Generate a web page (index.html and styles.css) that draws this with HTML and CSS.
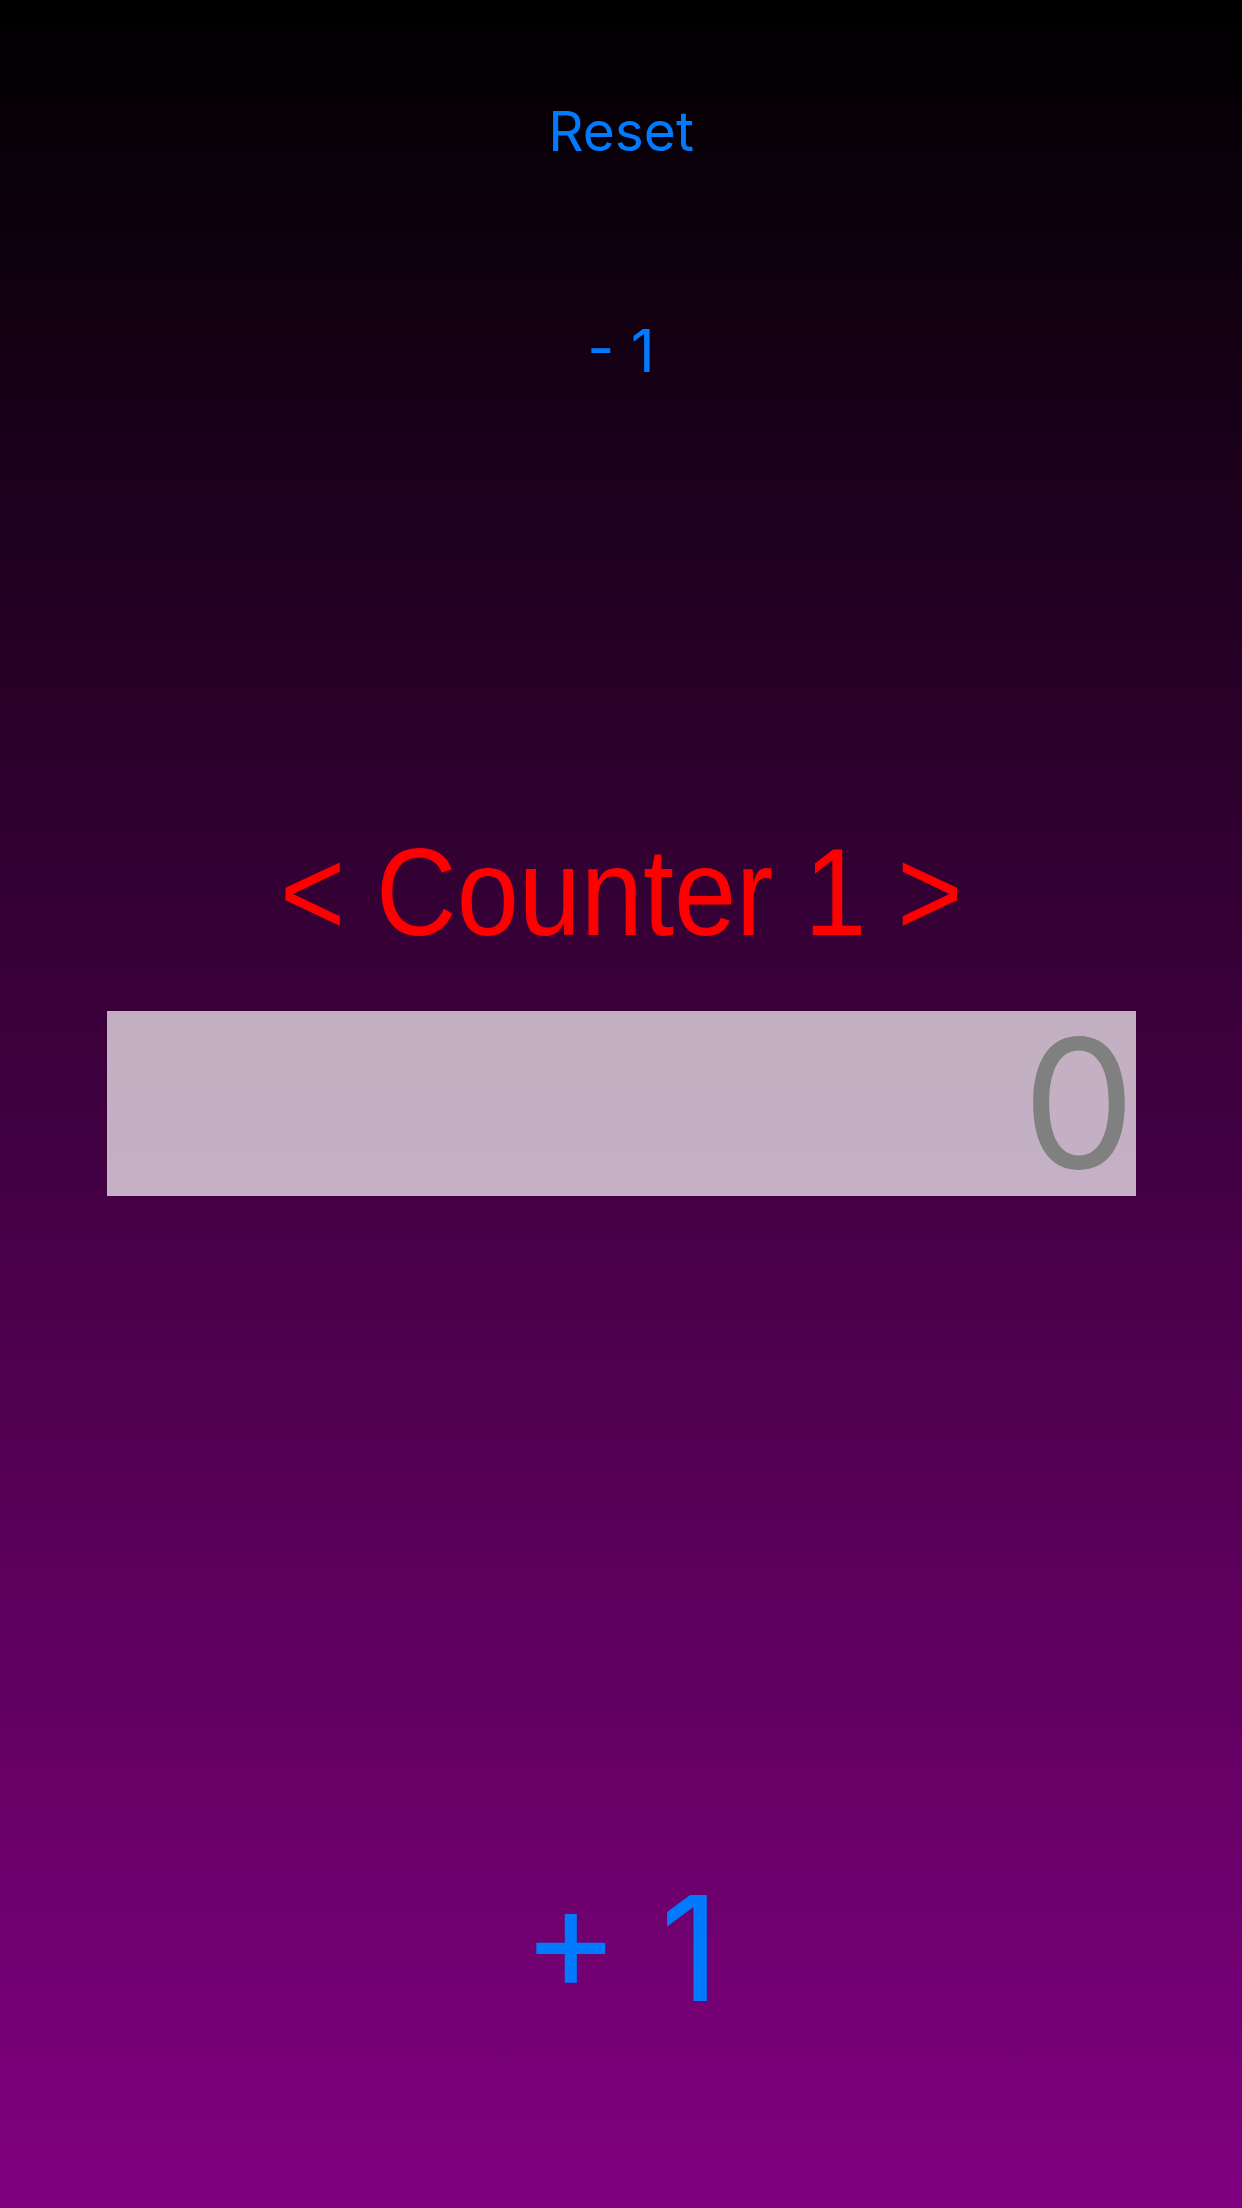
FILE: index.html
```html
<!DOCTYPE html>
<html>

<head>
    <title> Counter </title>
    <meta charset="utf-8">
    <link rel="stylesheet" href="styles.css">
    <script>
        let counters = [0, 0, 0]
        let current = 0

        function afficher() {
            document.getElementById('nom').textContent = 'Counter ' + (current + 1)
            document.getElementById('valeur').textContent = counters[current]
        }

        function ajouter(n) {
            counters[current] += n
            afficher()
        }

        function reset_counter() {
            counters[current] = 0
            afficher()
        }

        function changer(sens) {
            current = (current + sens + counters.length) % counters.length
            afficher()
        }
    </script>
</head>

<body>
    <main class="screen">
        <button class="btn btn-reset" onclick="reset_counter()">Reset</button>

        <button class="btn btn-minus" onclick="ajouter(-1)">- 1</button>

        <div class="title">
            <span class="arrow" onclick="changer(-1)">&lt;</span>
            <span id="nom">Counter 1</span>
            <span class="arrow" onclick="changer(1)">&gt;</span>
        </div>

        <!-- valeur du compteur, alignée à droite -->
        <div class="display">
            <span id="valeur">0</span>
        </div>

        <button class="btn btn-plus" onclick="ajouter(1)">+ 1</button>
    </main>
</body>

</html>
```

FILE: styles.css
```css
body {
    margin: 0;
    background: linear-gradient(to bottom, #000000, #800080);
    font-family: Inter, "Noto Sans", sans-serif;
    /* fond noir vers violet sur toute la hauteur */
    min-height: 2208px;
}

.screen {
    display: flex;
    flex-direction: column;
    align-items: center;
}

.btn {
    background: none;
    border: none;
    padding: 0;
    color: #007aff;
    font-family: Inter, "Noto Sans", sans-serif;
    line-height: 1;
    cursor: pointer;
}

.btn-reset {
    font-size: 55px;
    margin-top: 104px;
}

.btn-minus {
    font-size: 59px;
    margin-top: 162px;
}

.title {
    margin-top: 450px;
    font-family: "Liberation Sans", Arial, sans-serif;
    font-size: 124px;
    line-height: 1;
    color: #ff0000;
    white-space: nowrap;
    /* police un peu plus étroite */
    transform: scaleX(0.9);
}

.arrow {
    cursor: pointer;
}

.display {
    margin-top: 57px;
    width: 1029px;
    height: 185px;
    background-color: rgba(255, 255, 255, 0.69);
    display: flex;
    align-items: center;
    justify-content: flex-end;
}

#valeur {
    font-size: 179px;
    line-height: 1;
    color: #808080;
}

.btn-plus {
    font-size: 146px;
    margin-top: 679px;
}
```
